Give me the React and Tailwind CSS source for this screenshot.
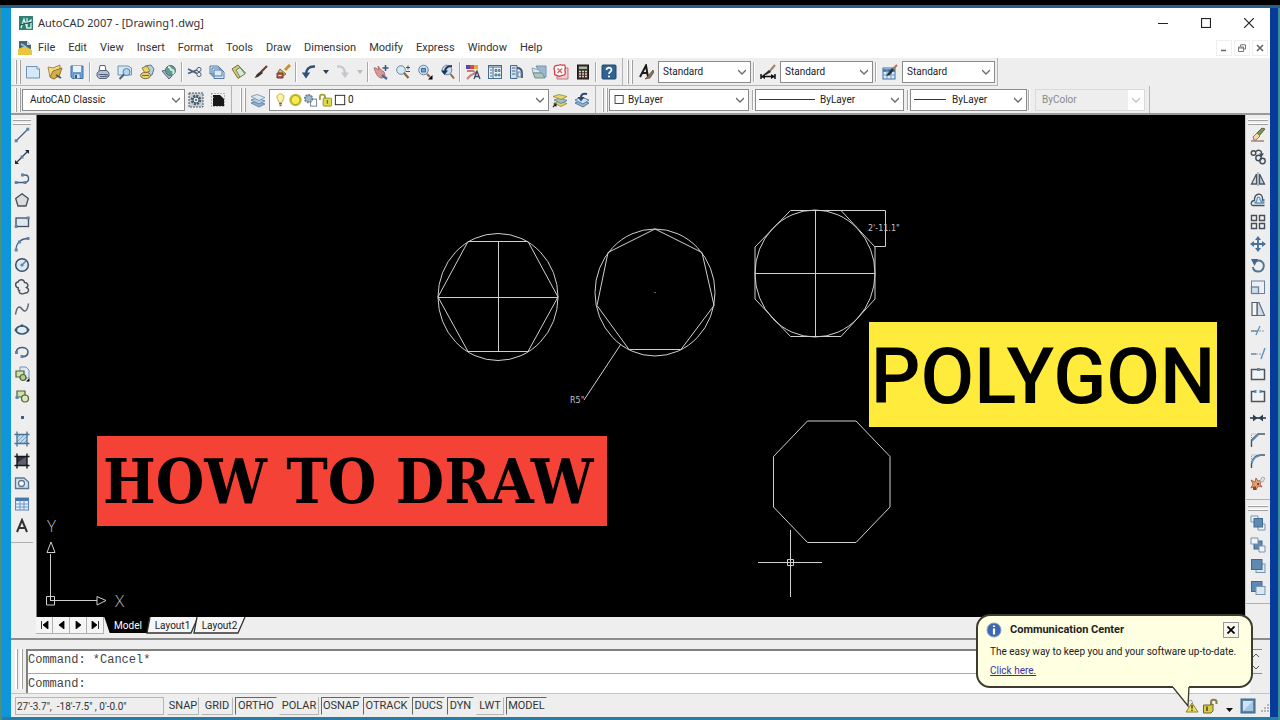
import React from "react";

const NAVY = "#3b5f86";
const STEEL = "#5d86ad";
const PALE = "#cfe3f4";

/* ---------- drawings on a 16 x 16 grid ---------- */
const art = {
  fresh: (
    <g>
      <path d="M1.500 2.500H12L14.500 5V14H1.500Z" fill="#d5e8f5" stroke="#6e93b4" />
      <path d="M12 2.500V5H14.500" fill="#fff" stroke="#6e93b4" />
    </g>
  ),
  open: (
    <g>
      <path d="M1 3L6 4L13 1V10L7 15L3 13Z" fill="#f3d98c" stroke="#a98a3c" />
      <path d="M3 13L6 7L15 4L12 12L7 15Z" fill="#d9ad45" stroke="#8f7434" />
      <path d="M9 11L14 14" stroke="#4f5b4a" strokeWidth="2" />
    </g>
  ),
  save: (
    <g>
      <path d="M2 2H14V14.500H3.500L2 13Z" fill="#6f9fd0" stroke="#426fa3" />
      <rect x="4" y="2" width="8" height="6" fill="#eaf3fb" />
      <rect x="5" y="10" width="6" height="4.500" fill="#dbe7f3" stroke="#426fa3" strokeWidth=".6" />
      <rect x="6" y="11" width="2" height="3" fill="#33557e" />
    </g>
  ),
  print: (
    <g stroke="#56617a">
      <path d="M4 7L5 1.500H10L11 7" fill="#fff" />
      <path d="M2 9L5 6.500H12L14 9V12L11 14.500H4L2 12Z" fill="#b7bfd6" />
      <path d="M3.500 10.500H12.500M5 12.500H11" />
      <circle cx="12" cy="11.500" r="1" fill="#e9ecf5" />
    </g>
  ),
  preview: (
    <g>
      <path d="M1 2H11L14.500 4V11H1Z" fill="#d5e8f5" stroke="#6e93b4" />
      <circle cx="9.500" cy="8" r="3.500" fill="#b3d6ef" stroke="#597ea3" />
      <path d="M7 10.500L2.500 15" stroke="#4d627c" strokeWidth="2" />
    </g>
  ),
  publish: (
    <g>
      <path d="M6 2L12 1L15 5L13 11L8 12Z" fill="#b9cde3" stroke="#5f7896" />
      <path d="M3 4L8 2L11 7L6 9Z" fill="#f0d468" stroke="#92802f" />
      <ellipse cx="6.500" cy="11.500" rx="5" ry="3.200" fill="#ead16d" stroke="#6e6a45" />
      <path d="M3 11.500H10" stroke="#6e6a45" />
    </g>
  ),
  globe: (
    <g>
      <path d="M1 7L5 6L11 12L8 15Z" fill="#a9b2c8" stroke="#5b6580" />
      <circle cx="9.500" cy="6.500" r="5" fill="#5d9f8a" stroke="#4b6d9c" />
      <path d="M7 3C10 3 9 6 11 6S13 8 12 10" fill="none" stroke="#d9efe4" strokeWidth="2" />
    </g>
  ),
  cut: (
    <g fill="none" stroke="#4d5f7c">
      <path d="M1 5L10 9.500M1 9.500L10 6" strokeWidth="1.600" />
      <circle cx="12" cy="5.500" r="2.100" />
      <circle cx="12" cy="10.500" r="2.100" />
    </g>
  ),
  copy: (
    <g fill="#d9e9f6" stroke="#4f7aa5">
      <path d="M1 2H9L11 4V10H1Z" />
      <path d="M5 6H13L15 8V14.500H5Z" />
      <path d="M3 4H11L13 6V12H3Z" fill="none" />
    </g>
  ),
  paste: (
    <g>
      <path d="M1 5L7 1L14.500 9L7 14.500Z" fill="#d9c77a" stroke="#75703f" />
      <path d="M5 6L9 3.500L14 10L9 13Z" fill="#d6ead4" stroke="#6b8a62" />
    </g>
  ),
  brush: (
    <g>
      <path d="M14 2L8 8" stroke="#6e3f2c" strokeWidth="2.200" />
      <path d="M8 7L10 9L5 13L1.500 14L4 10Z" fill="#3d3530" />
    </g>
  ),
  painter: (
    <g>
      <path d="M15 1L10 6" stroke="#c9932c" strokeWidth="3" />
      <path d="M5 5L11 10L8 12L3 8Z" fill="#e0b858" stroke="#86682c" />
      <path d="M2 9H8V14H2Z" fill="#b9584a" stroke="#5c4540" />
      <path d="M3.500 11.500H6.500" stroke="#fff" />
    </g>
  ),
  undo: (
    <g fill="none" stroke="#2f507c">
      <path d="M14 2.500C8 2 5 5 5 11" strokeWidth="2.400" />
      <path d="M.8 8.500H9.200L5 14.500Z" fill="#2f507c" stroke="none" />
    </g>
  ),
  redo: (
    <g fill="none" stroke="#c3c7cb">
      <path d="M2 2.500C8 2 10 5 10 11" strokeWidth="2.200" />
      <path d="M6 8.500H14L10 14Z" fill="#c3c7cb" stroke="none" />
    </g>
  ),
  pan: (
    <g>
      <path d="M1 4C3 3 5 6 6 6L5 2L8 6L11 8C13 12 11 14 8 14C4 13 3 9 1 4Z" fill="#d99a96" stroke="#b06c6a" />
      <path d="M12.500 1V7M9.500 4H15.500" stroke="#34557f" strokeWidth="1.500" />
      <path d="M9 11L14 15" stroke="#516b93" strokeWidth="2.500" />
    </g>
  ),
  zoomRt: (
    <g>
      <circle cx="6" cy="6" r="4.300" fill="#d4e8f7" stroke="#6d87a3" />
      <path d="M9 9L13.500 14" stroke="#8a6743" strokeWidth="2.200" />
      <path d="M11 3.500H15M13 1.500V5.500M11 7.500H15" stroke="#34557f" />
    </g>
  ),
  zoomWin: (
    <g>
      <circle cx="6.500" cy="6" r="4.800" fill="#c6def1" stroke="#6d87a3" />
      <path d="M4.500 4.500H8.500V8H4.500Z" fill="#7ca1c8" stroke="#49698c" />
      <path d="M10 10L13 13" stroke="#8a6743" strokeWidth="2" />
      <path d="M15.500 11V15.500H11Z" fill="#000" />
    </g>
  ),
  zoomPrev: (
    <g>
      <circle cx="8" cy="6" r="4.800" fill="#c6def1" stroke="#6d87a3" />
      <path d="M11.500 10L15 14.500" stroke="#8a6743" strokeWidth="2" />
      <path d="M13 2C8 2 6 4 6 8" fill="none" stroke="#1f3557" strokeWidth="2" />
      <path d="M2 6.500H9L5.500 11Z" fill="#1f3557" />
    </g>
  ),
  props: (
    <g>
      <rect x="1" y="1" width="4" height="4" fill="#5a48b0" />
      <rect x="5" y="1" width="4" height="4" fill="#d5484f" />
      <rect x="9" y="1" width="4" height="4" fill="#e8a83a" />
      <path d="M2 7H8L11 9L6 11L2 15" fill="none" stroke="#c27f7d" strokeWidth="2" />
      <path d="M9 15L12 7L15 15M10 12.500H14" fill="none" stroke="#3d4763" strokeWidth="1.300" />
    </g>
  ),
  center: (
    <g stroke="#47698b">
      <rect x="1.500" y="1.500" width="13" height="13" fill="#e6f0f8" />
      <path d="M1.500 3H14.500M6 3V14" />
      <path d="M3 6H5M3 9H5M3 12H5" />
      <path d="M8 5.500H10V7.500H8ZM11.500 5.500H13V7.500H11.500ZM8 10H10V12H8ZM11.500 10H13V12H11.500Z" fill="#9fbe9c" strokeWidth=".8" />
    </g>
  ),
  palettes: (
    <g>
      <path d="M1.500 1.500H8V14.500H1.500Z" fill="#cfe0f0" stroke="#47698b" />
      <path d="M3 4H6.500M3 7H6.500M3 10H6.500" stroke="#47698b" />
      <path d="M8 4C12 4 13 6 13 9V14" fill="none" stroke="#3c5879" strokeWidth="1.800" />
      <path d="M9 8H12V13H9Z" fill="#e8eef4" stroke="#6d87a3" />
    </g>
  ),
  sheets: (
    <g>
      <path d="M5 2H15V13H11Z" fill="#9bb8d0" stroke="#7494b0" />
      <path d="M1 4L8 6L10 9H2Z" fill="#dce8ef" stroke="#85a0b6" />
      <path d="M2 9L11 9L14 14H4Z" fill="#aec7b7" stroke="#6e8f94" />
    </g>
  ),
  markup: (
    <g>
      <path d="M4 4H15V15H4Z" fill="#f0cfd2" stroke="#b97980" />
      <path d="M2 2C4 .500 5 2 6.500 1S9 2 10.500 1S12.500 3 12 5S13 8 12 10S9 11 7.500 12S4 11 2.500 11S2 8 1.500 6.500S1 3 2 2Z" fill="#fff" stroke="#d23f4d" strokeWidth="1.300" />
      <path d="M4.500 4.500L9 9M9 4.500L4.500 9" stroke="#d8656f" strokeWidth="1.500" />
    </g>
  ),
  calc: (
    <g>
      <rect x="2.500" y="1" width="11" height="14" fill="#3b3330" stroke="#1d1918" />
      <rect x="4" y="2.500" width="8" height="2.500" fill="#a4b894" />
      <path d="M4 7.500H12M4 10H12M4 12.500H12" stroke="#e7c9bd" strokeWidth="1.400" strokeDasharray="2 1" />
    </g>
  ),
  help: (
    <g>
      <rect x="1" y="1" width="14" height="14" rx="1" fill="#2f6291" stroke="#1f4870" />
      <path d="M5.500 6C5.500 2.800 10.800 3 10.500 6C10.300 7.800 8 7.800 8 10" fill="none" stroke="#fff" strokeWidth="1.700" />
      <circle cx="8" cy="12.500" r="1.100" fill="#fff" />
    </g>
  ),
  textStyle: (
    <g>
      <path d="M2 13L8 1.500L10 13M4 9H10" fill="none" stroke="#1c1c1c" strokeWidth="2" />
      <path d="M15 6L10 12L7 15L12 14L16 8Z" fill="#8b7258" stroke="#51463a" strokeWidth=".7" />
    </g>
  ),
  dimStyle: (
    <g>
      <path d="M1 10V15M15 10V15M1 12.500H15" stroke="#111" strokeWidth="1.500" />
      <path d="M1 12.500L5 10V15ZM15 12.500L11 10V15Z" fill="#111" />
      <path d="M15 1L9 8" stroke="#a2806b" strokeWidth="2" />
      <path d="M9 6L11 8L6 11L3 11Z" fill="#2e2e2e" />
    </g>
  ),
  tableStyle: (
    <g>
      <rect x="1" y="4" width="12" height="11" fill="#dcebf8" stroke="#3e6da4" />
      <path d="M1 6.500H13" stroke="#3e6da4" strokeWidth="2.500" />
      <path d="M5 5V15M9 5V15M1 11H13" stroke="#6f97c3" />
      <path d="M15 1L11 5" stroke="#b0764b" strokeWidth="2" />
      <path d="M10 4L12 6L8 11L4 12L6 9Z" fill="#23364f" />
    </g>
  ),
  gear: (
    <g>
      <rect x="1" y="1" width="14" height="14" fill="#c6ced6" stroke="#4b545f" strokeDasharray="2 1" />
      <circle cx="8" cy="8" r="4" fill="none" stroke="#4b5967" strokeWidth="2.500" strokeDasharray="2 1.100" />
      <circle cx="8" cy="8" r="3" fill="#dfe6ec" stroke="#4b5967" />
      <circle cx="8" cy="8" r="1" fill="#4b5967" />
    </g>
  ),
  myspace: (
    <g>
      <rect x="1.500" y="1.500" width="13" height="13" fill="none" stroke="#777" strokeDasharray="1 2" />
      <path d="M3 14V6L6 3H10L14 7V14Z" fill="#171717" />
      <path d="M3 4H7" stroke="#171717" strokeWidth="2" />
    </g>
  ),
  layers: (
    <g strokeWidth=".8">
      <path d="M1 11L7 9L15 12L9 15Z" fill="#8fb2cf" stroke="#587b9c" />
      <path d="M1 8L7 6L15 9L9 12Z" fill="#b5cfe3" stroke="#587b9c" />
      <path d="M1 4.500L7 2.500L15 5.500L9 8.500Z" fill="#dbe8f2" stroke="#6e90ae" />
    </g>
  ),
  layerCur: (
    <g strokeWidth=".8">
      <path d="M2 11L8 9L15 11.500L9 14.500Z" fill="#e2cf60" stroke="#92853a" />
      <path d="M2 8L8 6L15 8.500L9 11.500Z" fill="#9fbed4" stroke="#587b9c" />
      <path d="M1 4.500L7 2.500L15 4.500L9 7.500Z" fill="#e6d76d" stroke="#92853a" />
      <path d="M1 15L4 12M1.500 12H4V14.500" fill="none" stroke="#222" strokeWidth="1.200" />
    </g>
  ),
  layerPrev: (
    <g>
      <path d="M1 11L7 8L15 11L9 15Z" fill="#8fb2cf" stroke="#587b9c" />
      <path d="M1 8L7 5L15 8L9 12Z" fill="#cfe0ee" stroke="#587b9c" />
      <path d="M13 2C8 1 7 3 7 6" fill="none" stroke="#2c4a74" strokeWidth="2.200" />
      <path d="M3.500 5H10.500L7 9.500Z" fill="#2c4a74" />
    </g>
  ),
  bulb: (
    <g>
      <path d="M8 1.500C4.500 1.500 3.500 5 5 7.500L6.500 10.500H9.500L11 7.500C12.500 5 11.500 1.500 8 1.500Z" fill="#fbf3a0" stroke="#b8a54a" />
      <path d="M6.500 12H9.500M7 14H9" stroke="#666" strokeWidth="1.500" />
    </g>
  ),
  sun: (
    <g>
      <circle cx="8" cy="8" r="6.600" fill="#c9c045" />
      <circle cx="8" cy="8" r="4.800" fill="#f6ef4b" stroke="#a29a26" />
    </g>
  ),
  vpFreeze: (
    <g>
      <rect x="8" y="7" width="6.500" height="7.500" fill="#fff" stroke="#6c8291" />
      <circle cx="6" cy="6.500" r="4" fill="#9db8c9" stroke="#6c8291" strokeWidth="2" strokeDasharray="2 1" />
    </g>
  ),
  unlock: (
    <g>
      <path d="M2 8V4.500C2 1.500 7.500 1.500 7.500 4.500V8" fill="none" stroke="#a0a032" strokeWidth="2" />
      <rect x="5.500" y="6" width="9" height="8.500" rx="1" fill="#dfdc4b" stroke="#8d8d2b" />
      <path d="M10 8V12" stroke="#7a7a22" strokeWidth="1.500" />
    </g>
  ),
  swatch: <rect x="2.500" y="3" width="10" height="10" fill="#fff" stroke="#222" />,

  /* draw toolbar */
  line: (
    <g>
      <path d="M2 14L14 2" stroke="#46607c" strokeWidth="1.300" />
      <rect x=".7" y="12.300" width="3" height="3" fill={STEEL} />
      <rect x="12.300" y=".7" width="3" height="3" fill={STEEL} />
    </g>
  ),
  xline: (
    <g>
      <path d="M2 14L14 2" stroke="#2c3a49" strokeWidth="1.300" />
      <path d="M1 15V11L5 15ZM15 1V5L11 1Z" fill="#1f2831" />
      <rect x="6.500" y="6.500" width="3" height="3" fill={STEEL} />
    </g>
  ),
  pline: (
    <g fill="none" stroke="#46607c">
      <path d="M2 12.500H11C16 12 15.500 5 11 5H8" strokeWidth="1.400" />
      <path d="M.7 11H3.700V14H.7ZM9.500 11H12.500V14H9.500ZM7 3.500H10V6.500H7Z" fill={STEEL} stroke="none" />
    </g>
  ),
  polygon: <path d="M8 1.700L14.300 6.500L12 14H4L1.700 6.500Z" fill="#d9dde0" stroke="#474d53" strokeWidth="1.300" />,
  rect: (
    <g>
      <rect x="2" y="4" width="12.500" height="8.500" fill="#dde8f1" stroke="#3f4f5f" strokeWidth="1.300" />
      <path d="M.7 11H3.700V14H.7ZM12.700 2.500H15.700V5.500H12.700Z" fill={STEEL} />
    </g>
  ),
  arc: (
    <g>
      <path d="M2 14C2 7 7 2.500 14 2.500" fill="none" stroke="#46607c" strokeWidth="1.300" />
      <path d="M.7 12.500H3.700V15.500H.7ZM12.500 1H15.500V4H12.500ZM4 4.500H7V7.500H4Z" fill={STEEL} />
    </g>
  ),
  circle: (
    <g>
      <circle cx="8" cy="8" r="6.300" fill="#dbe9f4" stroke="#3b4f63" strokeWidth="1.500" />
      <path d="M8 8L12 4" stroke={STEEL} strokeWidth="1.500" />
      <circle cx="8" cy="8" r="1.600" fill={STEEL} />
    </g>
  ),
  cloud: (
    <path d="M5 9C1 9 .500 3.500 4 3C5 0 10 0 10.500 3.500C14 3.500 15 7 12.500 8.500C16 10 14.500 14.500 11 14C8 16 4 14 5.500 11.500C3.500 11.500 4 9 5 9Z" fill="#e9edf0" stroke="#46515c" strokeWidth="1.400" />
  ),
  spline: <path d="M1.500 13.500C3 4 6 5 8 8S13 12 14.500 2.500" fill="none" stroke="#5b6570" strokeWidth="1.500" />,
  ellipse: (
    <g>
      <ellipse cx="8" cy="8" rx="6" ry="4" fill="#e1ecf4" stroke="#3c5872" strokeWidth="1.700" />
      <path d="M.7 6.700H3.300V9.300H.7ZM12.700 6.700H15.300V9.300H12.700ZM6.700 2.500H9.300V5H6.700Z" fill="#35577a" />
    </g>
  ),
  ellArc: (
    <g>
      <path d="M2.500 8C2 2 14 2 14 8C14 11.500 11 13 8 12.500" fill="none" stroke="#46607c" strokeWidth="1.600" />
      <path d="M1 7H4V10H1ZM6.500 11H9.500V14H6.500Z" fill={STEEL} />
    </g>
  ),
  insert: (
    <g>
      <path d="M6 1H12L15 4V12H6Z" fill="#dfeaf3" stroke="#6e93b4" />
      <path d="M2 5H10V11H2Z" fill="#cfe0a4" stroke="#4d603a" strokeWidth="1.200" />
      <circle cx="9" cy="11.500" r="3" fill="#b4c98c" stroke="#4d603a" strokeWidth="1.200" />
      <path d="M15.500 12V15.500H12Z" fill="#000" />
    </g>
  ),
  block: (
    <g>
      <path d="M3 3H11V9H3Z" fill="#cfe0a4" stroke="#4d603a" strokeWidth="1.200" />
      <path d="M1.500 8H4.500V11H1.500Z" fill={STEEL} />
      <circle cx="11" cy="10.500" r="3.500" fill="#dbe7bd" stroke="#4d603a" strokeWidth="1.200" />
    </g>
  ),
  point: <rect x="7" y="7" width="3" height="3" fill={NAVY} />,
  hatch: (
    <g>
      <path d="M3 3H13V13H3Z" fill="#bcd9ec" />
      <path d="M3 7L7 3M3 11L11 3M5 13L13 5M9 13L13 9" stroke="#7aa4c4" />
      <path d="M3 .500V15.500M13 .500V15.500M.500 3.500H15.500M.500 12.500H15.500" stroke="#49708f" strokeWidth="1.300" />
    </g>
  ),
  gradient: (
    <g>
      <path d="M3 3H13V13H3Z" fill="#59606e" />
      <path d="M3 3H13L3 10Z" fill="#30343c" />
      <path d="M3 .500V15.500M13 .500V15.500M.500 3.500H15.500M.500 12.500H15.500" stroke="#14161a" strokeWidth="1.400" />
    </g>
  ),
  region: (
    <g>
      <path d="M1.500 3H10L14.500 7V13.500H1.500Z" fill="#d5e3ee" stroke="#5a7690" strokeWidth="1.300" />
      <circle cx="7.500" cy="8.500" r="3" fill="#fff" stroke="#5a7690" strokeWidth="1.300" />
    </g>
  ),
  table: (
    <g>
      <rect x="1.500" y="2" width="13" height="12" fill="#e3eefa" stroke="#5b86bb" />
      <path d="M1.500 3.500H14.500" stroke="#4675b0" strokeWidth="3" />
      <path d="M1.500 8H14.500M1.500 11H14.500M6 4V14M10 4V14" stroke="#6e97c7" />
    </g>
  ),
  mtext: <path d="M3 14L8 2L13 14M4.800 10H11.200" fill="none" stroke="#333" strokeWidth="2" />,

  /* modify toolbar */
  erase: (
    <g>
      <path d="M1 14H14" stroke="#7c4a44" />
      <path d="M15 2L12 1L7 6L9 9Z" fill="#7c9458" stroke="#566b3c" />
      <path d="M7 6L3 10L4 13H6L10 9Z" fill="#f0d9a6" stroke="#a5733e" />
    </g>
  ),
  copyObj: (
    <g fill="none" stroke="#434d57" strokeWidth="1.400">
      <circle cx="3.500" cy="4" r="2.300" />
      <circle cx="8.500" cy="9" r="2.700" />
      <circle cx="12.500" cy="12" r="2.700" />
      <path d="M6 2.500C9 0 12 2 11.500 5" />
      <path d="M9 4.500H14L11.500 8Z" fill="#434d57" stroke="none" />
    </g>
  ),
  mirror: (
    <g>
      <path d="M6.500 3V13H1.500Z" fill="#dfe4e8" stroke="#4c565f" strokeWidth="1.300" />
      <path d="M9.500 3V13H14.500Z" fill="#b9d0e2" stroke="#4c565f" strokeWidth="1.300" />
      <path d="M8 1V15" stroke="#7b8fa1" />
    </g>
  ),
  offset: (
    <g fill="none">
      <path d="M14.500 13.500H3C0 13 1 8.500 4.500 8.500C4 1 12.500 0 12.500 6.500V8H14.500" stroke="#3f5367" strokeWidth="1.300" />
      <path d="M14.500 11H5C4 10.500 7 11 7 7.500C7 4.500 10 4.500 10 7C10 9 12 10 14.500 10" stroke="#5f93bf" strokeWidth="1.300" />
    </g>
  ),
  array: (
    <path d="M1.500 1.500H6.500V6.500H1.500ZM9.500 1.500H14.500V6.500H9.500ZM1.500 9.500H6.500V14.500H1.500ZM9.500 9.500H14.500V14.500H9.500Z" fill="#eff2f4" stroke="#474e55" strokeWidth="1.400" />
  ),
  move: (
    <g>
      <path d="M8 2V14M2 8H14" stroke="#45719c" strokeWidth="1.800" />
      <path d="M8 0L11 4H5ZM8 16L11 12H5ZM0 8L4 5V11ZM16 8L12 5V11Z" fill="#45719c" />
    </g>
  ),
  rotate: (
    <g>
      <path d="M5 4C10 0 15 5 13.500 9.500C12 15 4 15 2.800 9" fill="none" stroke="#50748f" strokeWidth="1.900" />
      <path d="M1 1H8L4.500 8Z" fill="#3f688c" />
    </g>
  ),
  scale: (
    <g fill="#eaf0f4" stroke="#67829a">
      <rect x="1.500" y="2" width="13" height="12.500" />
      <rect x="1.500" y="8" width="7" height="6.500" fill="#cfdfea" strokeWidth="1.300" />
    </g>
  ),
  stretch: (
    <g>
      <path d="M7 1.500H9L14.500 14.500H7Z" fill="#cfdde8" stroke="#5a7289" strokeWidth="1.200" />
      <path d="M2 1.500H7V14.500H2Z" fill="#f5f5f5" stroke="#555e66" strokeWidth="1.200" />
    </g>
  ),
  trim: (
    <g>
      <path d="M1 8H8" stroke="#5c7388" strokeWidth="1.300" />
      <path d="M9 8H15" stroke="#8a98a5" strokeDasharray="2 1" />
      <path d="M6 12L10 3" stroke="#5b93c2" strokeWidth="1.300" />
    </g>
  ),
  extend: (
    <g>
      <path d="M1 9H6" stroke="#5c7388" strokeWidth="1.300" />
      <path d="M6 9H11" stroke="#8a98a5" strokeDasharray="2 1" />
      <path d="M11 14L15 3" stroke="#5b93c2" strokeWidth="1.400" />
    </g>
  ),
  breakPt: (
    <g>
      <rect x="1.500" y="3.500" width="13" height="10" fill="#f1f4f6" stroke="#4c555e" strokeWidth="1.500" />
      <rect x="7" y="2" width="3" height="3" fill={STEEL} />
    </g>
  ),
  breakObj: (
    <g>
      <path d="M5 3.500H1.500V13.500H14.500V3.500H11" fill="#f1f4f6" stroke="#4c555e" strokeWidth="1.500" />
      <path d="M4.500 2H6.500V5H4.500ZM9.500 2H11.500V5H9.500Z" fill={STEEL} />
    </g>
  ),
  join: (
    <g>
      <path d="M0 8H16" stroke="#37444f" strokeWidth="1.700" />
      <path d="M7.500 8L3 4.500V11.500ZM8.500 8L13 4.500V11.500Z" fill="#2b3f51" />
    </g>
  ),
  chamfer: (
    <g>
      <path d="M1.500 15V8L8 2H15" fill="none" stroke="#4c555e" strokeWidth="1.400" />
      <path d="M1.500 6V2H6" fill="none" stroke="#8795a2" strokeDasharray="1 1" />
      <path d="M2 9L8.500 2.500" stroke="#5b93c2" strokeWidth="1.600" />
    </g>
  ),
  fillet: (
    <g>
      <path d="M1.500 15V11C2 5 6 2 11 2H15" fill="none" stroke="#4c555e" strokeWidth="1.400" />
      <path d="M1.500 6V2H6" fill="none" stroke="#8795a2" strokeDasharray="1 1" />
      <path d="M2 10C3 6 5 3.500 10 2.500" fill="none" stroke="#5b93c2" strokeWidth="1.600" />
    </g>
  ),
  explode: (
    <g>
      <path d="M1 5L5 7L6 3L8 6L12 5L10 9L12 12L8 11L6 15L5 11L1 13L3 9Z" fill="#e0a468" stroke="#9c4f38" strokeWidth=".8" />
      <path d="M10 6L12 2L15 3L13 7Z" fill="#dfe3e6" stroke="#a9b2ba" />
      <path d="M3 12H6V15H3ZM7 8H9V10H7Z" fill="#9c3a2b" />
    </g>
  ),
  front: (
    <g>
      <path d="M1 1H8V7H1ZM8 9H15V15H8Z" fill="#eef4f9" stroke="#7693ad" />
      <rect x="4" y="3.500" width="8.500" height="8.500" fill="#5e8ab2" stroke="#44698c" />
    </g>
  ),
  back: (
    <g>
      <rect x="4" y="4" width="8" height="8" fill="#5e8ab2" stroke="#44698c" />
      <path d="M1 1H8V7H1ZM9 9H15V15H9Z" fill="#eef4f9" stroke="#7693ad" />
    </g>
  ),
  above: (
    <g>
      <rect x="6" y="6" width="9" height="8.500" fill="#dbe7f1" stroke="#7693ad" />
      <rect x="1.500" y="1.500" width="10.500" height="10" fill="#5e8ab2" stroke="#44698c" />
    </g>
  ),
  under: (
    <g>
      <rect x="1.500" y="1.500" width="10.500" height="10" fill="#5e8ab2" stroke="#44698c" />
      <rect x="6" y="6.500" width="9" height="8" fill="#dbe7f1" stroke="#7693ad" />
    </g>
  ),
  alert: (
    <g>
      <path d="M3 4L7 2L9 5" fill="none" stroke="#9aa0a6" />
      <path d="M8 5L14 14H2Z" fill="#eadf5c" stroke="#8e8530" />
      <path d="M8 7V10.500M8 11.500V13" stroke="#4a4520" strokeWidth="1.500" />
    </g>
  ),
  trayLock: (
    <g>
      <path d="M9 8V4C9 1 14.500 1 14.500 4V6" fill="none" stroke="#8a7f46" strokeWidth="2" />
      <path d="M1.500 7H9L11 6V13L9 15H1.500Z" fill="#d8cb4c" stroke="#6f672d" />
      <path d="M5 8.500V13" stroke="#6f672d" strokeWidth="2" />
    </g>
  ),
  clean: (
    <g>
      <rect x="1" y="1" width="14" height="14" fill="#5b86a9" stroke="#3e6384" />
      <rect x="3" y="3" width="10" height="10" fill={PALE} />
      <path d="M3 13L13 3V13Z" fill="#a3c6e2" />
    </g>
  ),
};

const Art = ({ name, cls = "size-4" }) => (
  <svg viewBox="0 0 16 16" className={cls + " shrink-0"} aria-hidden="true">
    {art[name]}
  </svg>
);

const Tool = ({ name, label }) => (
  <button type="button" aria-label={label} className="flex h-5 w-[22px] shrink-0 items-center justify-center">
    <Art name={name} />
  </button>
);

const SideTool = ({ name, label }) => (
  <button type="button" aria-label={label} className="flex h-4 w-full items-center justify-center">
    <Art name={name} />
  </button>
);

const Sep = () => <span className="mx-px h-5 w-0.5 shrink-0 border-l border-[#a8a8a8] bg-white" />;

const Grip = () => (
  <span className="mr-px ml-1 flex h-6 shrink-0 gap-0.5">
    <span className="w-0.5 border-r border-[#a0a0a0] bg-white" />
    <span className="w-0.5 border-r border-[#a0a0a0] bg-white" />
  </span>
);

const SideGrip = () => (
  <span className="mx-0.5 flex flex-col gap-0.5">
    <span className="h-0.5 border-b border-[#a0a0a0] bg-white" />
    <span className="h-0.5 border-b border-[#a0a0a0] bg-white" />
  </span>
);

const DropArrow = ({ label, muted }) => (
  <button type="button" aria-label={label} className="flex h-5 w-3 shrink-0 items-center justify-center">
    <svg viewBox="0 0 6 4" className="h-1 w-1.5">
      <path d="M0 0H6L3 4Z" fill={muted ? "#bbbbbb" : "#2f3f55"} />
    </svg>
  </button>
);

const Select = ({ label, value, width, pad = "pl-1", disabled = false, children }) => (
  <span className={"relative flex shrink-0 " + width}>
    <select
      aria-label={label}
      disabled={disabled}
      defaultValue={value}
      className={
        "h-[22px] w-full appearance-none border pr-4 text-[10px] leading-5 " +
        pad +
        (disabled ? " border-[#dadada] bg-[#eeeeee] text-[#8a8a8a] opacity-100" : " border-[#8b8b8b] bg-white text-[#222]")
      }
    >
      <option>{value}</option>
    </select>
    <span className="pointer-events-none absolute inset-y-0 left-1 flex items-center">{children}</span>
    <svg
      viewBox="0 0 8 5"
      className={"pointer-events-none absolute top-px right-px h-5 w-4 px-1 " + (disabled ? "bg-white" : "")}
      aria-hidden="true"
    >
      <path d="M0 .500L4 4.500L8 .500" fill="none" stroke={disabled ? "#c4c4c4" : "#6b6b6b"} strokeWidth="1.300" />
    </svg>
  </span>
);

const Stroke = ({ width }) => <span className={"h-px bg-[#333] " + width} />;

const menus = ["File", "Edit", "View", "Insert", "Format", "Tools", "Draw", "Dimension", "Modify", "Express", "Window", "Help"];

const standardTools = [
  [["fresh", "New"], ["open", "Open"], ["save", "Save"]],
  [["print", "Plot"], ["preview", "Plot preview"], ["publish", "Publish"], ["globe", "Publish to web"]],
  [["cut", "Cut"], ["copy", "Copy"], ["paste", "Paste"], ["brush", "Match properties"], ["painter", "Block editor"]],
];
const viewTools = [
  [["pan", "Pan"], ["zoomRt", "Zoom realtime"], ["zoomWin", "Zoom window"], ["zoomPrev", "Zoom previous"]],
  [["props", "Properties"], ["center", "DesignCenter"], ["palettes", "Tool palettes"], ["sheets", "Sheet set manager"], ["markup", "Markup set manager"], ["calc", "QuickCalc"]],
];

const drawTools = [
  ["line", "Line"], ["xline", "Construction line"], ["pline", "Polyline"], ["polygon", "Polygon"], ["rect", "Rectangle"],
  ["arc", "Arc"], ["circle", "Circle"], ["cloud", "Revision cloud"], ["spline", "Spline"], ["ellipse", "Ellipse"],
  ["ellArc", "Ellipse arc"], ["insert", "Insert block"], ["block", "Make block"], ["point", "Point"], ["hatch", "Hatch"],
  ["gradient", "Gradient"], ["region", "Region"], ["table", "Table"], ["mtext", "Multiline text"],
];
const modifyTools = [
  ["erase", "Erase"], ["copyObj", "Copy object"], ["mirror", "Mirror"], ["offset", "Offset"], ["array", "Array"],
  ["move", "Move"], ["rotate", "Rotate"], ["scale", "Scale"], ["stretch", "Stretch"], ["trim", "Trim"],
  ["extend", "Extend"], ["breakPt", "Break at point"], ["breakObj", "Break"], ["join", "Join"], ["chamfer", "Chamfer"],
  ["fillet", "Fillet"], ["explode", "Explode"],
];
const orderTools = [["front", "Bring to front"], ["back", "Send to back"], ["above", "Bring above"], ["under", "Send under"]];

const modes = [
  ["SNAP", false, "w-8"], ["GRID", false, "w-8"], ["ORTHO", true, "w-[42px]"], ["POLAR", false, "w-10"], ["OSNAP", true, "w-10"],
  ["OTRACK", true, "w-[47px]"], ["DUCS", true, "w-[33px]"], ["DYN", true, "w-[27px]"], ["LWT", false, "w-7"], ["MODEL", true, "w-[41px]"],
];

function TitleBar() {
  return (
    <header className="flex h-[30px] items-center bg-white pl-2">
      <svg viewBox="0 0 14 14" className="size-3.5" aria-hidden="true">
        <rect width="14" height="14" fill="#2f7f73" />
        <path d="M2 12L5 3L8 12M8 2V7L12 4V12H8Z" fill="none" stroke="#d6efe8" strokeWidth="1.300" />
        <path d="M1 9L13 6" stroke="#164d49" />
      </svg>
      <h1 className="pl-[5px] font-['Noto_Sans',sans-serif] text-[11px] text-[#333]">AutoCAD 2007 - [Drawing1.dwg]</h1>
      <div className="ml-auto flex">
        <button type="button" aria-label="Minimize" className="flex w-[43px] justify-center">
          <svg viewBox="0 0 10 10" className="size-2.5"><path d="M0 5.500H10" stroke="#222" /></svg>
        </button>
        <button type="button" aria-label="Maximize" className="flex w-[43px] justify-center">
          <svg viewBox="0 0 10 10" className="size-2.5"><rect x=".500" y=".500" width="9" height="9" fill="none" stroke="#222" strokeWidth="1.200" /></svg>
        </button>
        <button type="button" aria-label="Close" className="flex w-[43px] justify-center">
          <svg viewBox="0 0 10 10" className="size-2.5"><path d="M0 0L10 10M10 0L0 10" stroke="#222" strokeWidth="1.200" /></svg>
        </button>
      </div>
    </header>
  );
}

function MenuBar() {
  return (
    <nav className="flex h-5 items-center bg-white pr-0.5 pl-[7px]">
      <svg viewBox="0 0 14 16" className="h-4 w-3.5" aria-hidden="true">
        <path d="M1 1H9L13 5V9H1Z" fill="#44657c" />
        <path d="M9 1L13 5H9Z" fill="#c9dbe8" />
        <path d="M0 9L7 6L14 10V15H0Z" fill="#e9c63d" />
        <path d="M3 4L8 7" stroke="#a7c4d6" strokeWidth="1.500" />
      </svg>
      <ul className="flex gap-[13px] pl-1.5 text-[11px] text-[#333]">
        {menus.map((m) => (
          <li key={m}><button type="button">{m}</button></li>
        ))}
      </ul>
      <div className="ml-auto flex gap-0.5">
        <button type="button" aria-label="Minimize drawing" className="flex size-4 items-center justify-center border border-[#eee]">
          <svg viewBox="0 0 8 8" className="size-2"><path d="M1 6.500H6" stroke="#666" strokeWidth="1.500" /></svg>
        </button>
        <button type="button" aria-label="Restore drawing" className="flex size-4 items-center justify-center border border-[#eee]">
          <svg viewBox="0 0 8 8" className="size-2"><path d="M2.500 2.500V.800H7.500V5H6M.500 3H5.500V7.500H.500ZM.500 4H5.500" fill="none" stroke="#777" /></svg>
        </button>
        <button type="button" aria-label="Close drawing" className="flex size-4 items-center justify-center border border-[#eee]">
          <svg viewBox="0 0 8 8" className="size-2"><path d="M1 1L7 7M7 1L1 7" stroke="#666" strokeWidth="1.700" /></svg>
        </button>
      </div>
    </nav>
  );
}

function Toolbars() {
  return (
    <div className="border-b-2 border-[#9a9a9a] bg-[#eeeeee]">
      <div className="flex h-[28px] items-center">
        <div className="flex h-full items-center border-r border-b border-[#b5b5b5] pr-0.5">
          <Grip />
          {standardTools.map((g, i) => (
            <React.Fragment key={i}>
              {g.map(([n, l]) => <Tool key={n} name={n} label={l} />)}
              <Sep />
            </React.Fragment>
          ))}
          <Tool name="undo" label="Undo" />
          <DropArrow label="Undo list" />
          <Tool name="redo" label="Redo" />
          <DropArrow label="Redo list" muted />
          <Sep />
          {viewTools.map((g, i) => (
            <React.Fragment key={i}>
              {g.map(([n, l]) => <Tool key={n} name={n} label={l} />)}
              <Sep />
            </React.Fragment>
          ))}
          <Tool name="help" label="Help" />
        </div>
        <div className="flex h-full items-center gap-px border-r border-b border-[#b5b5b5] pr-0.5">
          <Grip />
          <Tool name="textStyle" label="Text style manager" />
          <Select label="Text style" value="Standard" width="w-[93px]" />
          <Sep />
          <Tool name="dimStyle" label="Dimension style manager" />
          <Select label="Dimension style" value="Standard" width="w-[93px]" />
          <Sep />
          <Tool name="tableStyle" label="Table style manager" />
          <Select label="Table style" value="Standard" width="w-[93px]" />
        </div>
      </div>
      <div className="flex h-[27px] items-center">
        <div className="flex h-full items-center border-r border-[#b5b5b5] pr-0.5">
          <Grip />
          <Select label="Workspace" value="AutoCAD Classic" width="w-[163px]" pad="pl-[7px]" />
          <Tool name="gear" label="Workspace settings" />
          <Tool name="myspace" label="My workspace" />
        </div>
        <div className="ml-1 flex h-full items-center border-r border-[#b5b5b5] pr-0.5">
          <Grip />
          <Tool name="layers" label="Layer properties manager" />
          <Select label="Layer" value="0" width="w-[280px]" pad="pl-[78px]">
            <Art name="bulb" cls="h-4 w-[15px]" />
            <Art name="sun" cls="h-4 w-[15px]" />
            <Art name="vpFreeze" cls="h-4 w-[15px]" />
            <Art name="unlock" cls="h-4 w-[15px]" />
            <Art name="swatch" cls="h-4 w-[15px]" />
          </Select>
          <Tool name="layerCur" label="Make object's layer current" />
          <Tool name="layerPrev" label="Layer previous" />
        </div>
        <div className="flex h-full items-center border-r border-[#b5b5b5] pr-1 pl-0.5">
          <Grip />
          <Select label="Color" value="ByLayer" width="w-[140px]" pad="pl-[18px]">
            <Art name="swatch" cls="size-[13px]" />
          </Select>
          <span className="w-0.5" />
          <Sep />
          <Select label="Linetype" value="ByLayer" width="w-[149px]" pad="pl-[64px]">
            <Stroke width="w-14" />
          </Select>
          <span className="w-0.5" />
          <Sep />
          <Select label="Lineweight" value="ByLayer" width="w-[117px]" pad="pl-[41px]">
            <Stroke width="w-8" />
          </Select>
          <Sep />
          <span className="w-1" />
          <Select label="Plot style" value="ByColor" width="w-[110px]" pad="pl-1.5" disabled />
        </div>
      </div>
    </div>
  );
}

function Drawing() {
  return (
    <svg
      viewBox="37 115 1208 502"
      width="1208"
      height="502"
      className="absolute top-0 left-0"
      fill="none"
      stroke="#cfcfcf"
      role="img"
      aria-label="Polygons drawn in and around circles"
    >
      <ellipse cx="498" cy="297" rx="60" ry="63.500" />
      <path d="M438 297L468 241.500H528L558 297L528 351.500H468ZM438 297.500H558M498.500 241V352" />

      <ellipse cx="655" cy="292.500" rx="60" ry="63.500" />
      <path d="M655 229L702 252.500L714 305.500L681 349.500H629L597 305.500L608 252.500Z" />
      <path d="M654.500 292.500H655.500" />
      <path d="M621 344L584 400" />

      <ellipse cx="815" cy="273.500" rx="60" ry="63.500" />
      <path d="M790.500 210.500H841L875 247V299L841 336.500H790.500L755 299V247Z" />
      <path d="M755 273.500H875M815.500 210V337M841 210.500H885.500V246.500H875" />

      <path d="M807.500 421H856L890 456.500V507L856 542.500H807.500L773.500 507V456.500Z" />
      <path d="M758 562.500H787M794 562.500H822M790.500 530V559M790.500 566V597" />
      <path d="M787.500 559.500H793.500V565.500H787.500ZM790.500 560V565M788 562.500H793" />

      <path d="M46.500 596.500H54.500V605H46.500ZM51 600.500H97M50.500 601V554M97 596.500V605L106 600.500ZM47 552.500H55L51 542Z" />
      <g stroke="none" fill="#c4c4c4" fontFamily="DejaVu Sans, sans-serif" fontSize="8">
        <text x="570" y="403">R5"</text>
        <text x="868" y="231">2'-11.1"</text>
      </g>
      <g stroke="none" fill="#b5b5b5" fontFamily="Open Sans, sans-serif" fontWeight="300" fontSize="17">
        <text x="115" y="607">X</text>
        <text x="47" y="532">Y</text>
      </g>
    </svg>
  );
}

function LayoutTabs() {
  const arrows = [
    ["First layout", "M1.500 0V8M8 0V8L3 4Z"],
    ["Previous layout", "M7 0V8L2 4Z"],
    ["Next layout", "M2 0V8L7 4Z"],
    ["Last layout", "M7.500 0V8M1 0V8L6 4Z"],
  ];
  return (
    <div className="flex h-[17px] items-stretch bg-[#eeeeee]">
      {arrows.map(([label, d]) => (
        <button key={label} type="button" aria-label={label} className="flex w-[17px] items-center justify-center border-r border-b border-[#b0b0b0] bg-[#f5f5f5]">
          <svg viewBox="0 0 9 8" className="h-2 w-[9px]"><path d={d} fill="#000" stroke="#000" strokeWidth=".8" /></svg>
        </button>
      ))}
      <div role="tablist" className="flex pl-[3px]">
        {["Model", "Layout1", "Layout2"].map((t, i) => (
          <button
            key={t}
            type="button"
            role="tab"
            aria-selected={i === 0}
            className={"relative flex items-center justify-center text-[10px] leading-4 " + (i === 0 ? "w-[42px] text-white" : "w-[47px] text-[#222]")}
          >
            <svg viewBox="0 0 47 16" preserveAspectRatio="none" className="absolute inset-0 size-full overflow-visible" aria-hidden="true">
              {i === 0 ? <path d="M-3 0H50L45 15H3Z" fill="#000" /> : <path d="M1 0L-2 15H42L49 0" fill="#f6f6f6" stroke="#333" strokeWidth="1.300" />}
            </svg>
            <span className="relative">{t}</span>
          </button>
        ))}
      </div>
    </div>
  );
}

function Workspace() {
  return (
    <main className="flex flex-1 bg-[#eeeeee]">
      <aside className="w-[25px] shrink-0 pr-[3px]">
        <div className="flex flex-col border-b border-[#b0b0b0] pt-1 pb-2">
          <SideGrip />
          <div className="mt-0.5 flex h-[407px] flex-col justify-between">
            {drawTools.map(([n, l]) => <SideTool key={n} name={n} label={l} />)}
          </div>
        </div>
      </aside>
      <div className="flex min-w-0 flex-1 flex-col">
        <section className="relative min-h-[502px] flex-1 overflow-hidden border-l border-[#808080] bg-black">
          <Drawing />
          <p className="absolute top-[321px] left-[60px] flex h-[90px] w-[510px] items-center bg-[#f44336] pl-1.5 font-['DejaVu_Serif_Condensed','DejaVu_Serif',serif] text-[62px] font-bold whitespace-nowrap text-black">
            HOW TO DRAW
          </p>
          <p className="absolute top-[207px] left-[832px] flex h-[105px] w-[348px] items-center justify-center bg-[#ffeb3b] pt-1 font-[Roboto,sans-serif] text-[78px] font-medium whitespace-nowrap text-black">
            POLYGON
          </p>
        </section>
        <LayoutTabs />
      </div>
      <aside className="w-[25px] shrink-0 border-l border-[#cccccc]">
        <div className="flex flex-col border-b border-[#b0b0b0] pt-1 pb-2">
          <SideGrip />
          <div className="mt-0.5 flex h-[364px] flex-col justify-between">
            {modifyTools.map(([n, l]) => <SideTool key={n} name={n} label={l} />)}
          </div>
        </div>
        <div className="flex flex-col border-b border-[#b0b0b0] pt-[5px] pb-[7px]">
          <SideGrip />
          <div className="mt-1 flex h-[81px] flex-col justify-between">
            {orderTools.map(([n, l]) => <SideTool key={n} name={n} label={l} />)}
          </div>
        </div>
      </aside>
    </main>
  );
}

function CommandLine() {
  return (
    <section className="border-t-2 border-[#8c8c8c] bg-[#eeeeee] pt-[9px]">
      <div className="flex pr-2 pl-1">
        <span className="mr-[3px] flex w-2 gap-0.5 pb-1">
          <span className="w-1 border-r border-[#a0a0a0] bg-white" />
          <span className="w-1 border-r border-[#a0a0a0] bg-white" />
        </span>
        <div className="flex-1 border-t-2 border-l-2 border-[#808080] bg-white font-['Liberation_Mono',monospace] text-xs text-[#444]">
          <p className="h-[22px] leading-[18px]">Command: *Cancel*</p>
          <label className="flex h-5 items-center border-t border-[#a8a8a8]">
            Command:
            <input type="text" aria-label="Command" className="min-w-0 flex-1 outline-none" />
          </label>
        </div>
        <div className="flex h-[25px] w-3 flex-col items-center justify-around border-y border-[#8c8c8c]">
          <svg viewBox="0 0 8 5" className="h-[5px] w-2"><path d="M1 4L4 1L7 4" fill="none" stroke="#555" /></svg>
          <svg viewBox="0 0 8 5" className="h-[5px] w-2"><path d="M1 1L4 4L7 1" fill="none" stroke="#555" /></svg>
        </div>
      </div>
    </section>
  );
}

function StatusBar() {
  return (
    <footer className="flex h-6 items-center border-t border-[#c4c4c4] bg-[#eeeeee] pl-1 text-[11px] text-[#333]">
      <output className="h-[18px] w-[149px] border border-[#b5b5b5] pl-px text-[10px] leading-[17px] whitespace-pre">{"27'-3.7\",  -18'-7.5\" , 0'-0.0\""}</output>
      <div className="flex gap-0.5 pl-[3px]">
        {modes.map(([m, on, w]) => (
          <button
            key={m}
            type="button"
            aria-pressed={on}
            className={
              "h-[18px] border text-center leading-4 " + w +
              (on ? " border-t-[#666] border-r-transparent border-b-transparent border-l-[#666]" : " border-t-transparent border-r-[#b5b5b5] border-b-[#b5b5b5] border-l-transparent")
            }
          >
            {m}
          </button>
        ))}
      </div>
      <div className="ml-auto flex items-center gap-0.5">
        <Art name="alert" />
        <Art name="trayLock" />
        <span className="w-px" />
        <button type="button" aria-label="Tray menu" className="flex h-5 w-3 items-end justify-center pb-1">
          <svg viewBox="0 0 7 4" className="h-1 w-[7px]"><path d="M0 0H7L3.500 4Z" fill="#111" /></svg>
        </button>
        <span className="w-px" />
        <button type="button" aria-label="Clean screen"><Art name="clean" /></button>
        <svg viewBox="0 0 12 12" className="mt-1 size-3" aria-hidden="true">
          <path d="M9 3H11M9 6H11M6 6H8M9 9H11M6 9H8M3 9H5" stroke="#b5b5b5" strokeWidth="2" />
        </svg>
      </div>
    </footer>
  );
}

function Balloon() {
  return (
    <aside className="absolute right-[25px] bottom-[32px] w-[277px] rounded-[14px] border-2 border-[#3b3b30] bg-[#ffffe1] px-3 pt-1.5 pb-1 text-[10px] text-[#222]">
      <div className="flex h-4 items-center">
        <svg viewBox="0 0 16 16" className="-ml-1 size-4" aria-hidden="true">
          <circle cx="8" cy="8" r="7" fill="#3c67b5" stroke="#8b9cc0" />
          <path d="M8 3.500V5M8 6.500V12.500" stroke="#fff" strokeWidth="2.200" />
        </svg>
        <h2 className="pl-2 text-[11px] font-bold">Communication Center</h2>
        <button type="button" aria-label="Close message" className="ml-auto flex size-4 items-center justify-center border border-[#999] bg-[#f6f6ec]">
          <svg viewBox="0 0 8 8" className="size-2"><path d="M.500 .500L7.500 7.500M7.500 .500L.500 7.500" stroke="#000" strokeWidth="1.800" /></svg>
        </button>
      </div>
      <p className="pt-1.5 leading-4 whitespace-nowrap">The easy way to keep you and your software up-to-date.</p>
      <a href="#updates" className="mt-1 mb-1 block leading-[14px] text-[#3b2fa8] underline">Click here.</a>
      <svg viewBox="0 0 20 22" className="absolute top-full right-[60px] h-[22px] w-5" aria-hidden="true">
        <path d="M1 0L17 20L18 0" fill="#ffffe1" stroke="#3b3b30" strokeWidth="1.300" />
        <path d="M1 -2H18V1H2Z" fill="#ffffe1" />
      </svg>
    </aside>
  );
}

export default function App() {
  return (
    <div className="flex min-h-screen flex-col bg-black pt-[5px] font-[Roboto,'Liberation_Sans',sans-serif]">
      <div className="h-[3px] bg-[#2b5c8a]" />
      <div className="relative flex flex-1 border-r-2 border-l-2 border-r-[#3c8f9a] border-l-[#4c8f7c] bg-[#2a7ba4] pb-[3px]">
        <div className="w-[9px] shrink-0 bg-[#0d96d9]" />
        <div className="flex min-w-0 flex-1 flex-col">
          <TitleBar />
          <MenuBar />
          <Toolbars />
          <Workspace />
          <div className="h-1 bg-[#eeeeee]" />
          <CommandLine />
          <StatusBar />
        </div>
        <div className="w-2 shrink-0 bg-[#063a9b]" />
        <Balloon />
      </div>
    </div>
  );
}
